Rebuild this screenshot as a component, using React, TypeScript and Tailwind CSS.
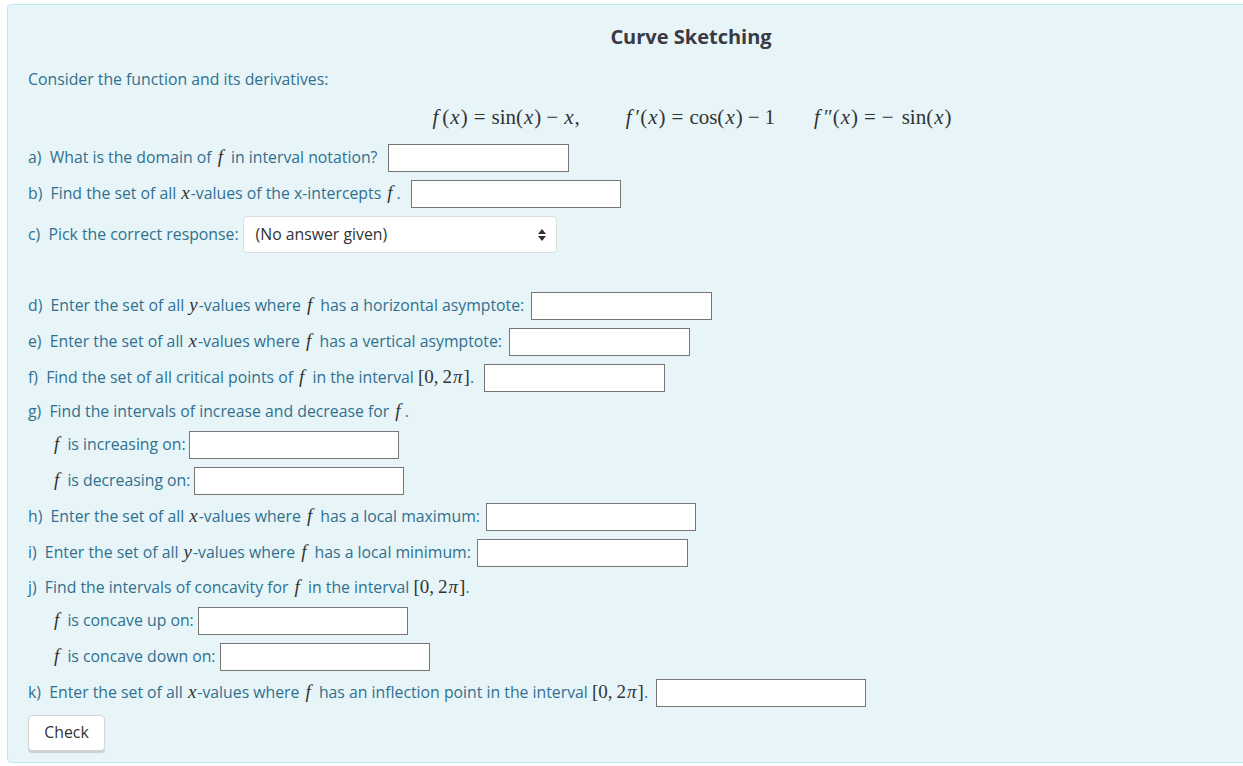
import React from "react";

const MF = '"Liberation Serif", "DejaVu Serif", serif';

const M = ({ children, size = "text-[19px]" }: { children: React.ReactNode; size?: string }) => (
  <span className={`text-[#333] ${size} italic leading-[20px]`} style={{ fontFamily: MF }}>
    {children}
  </span>
);
const R = ({ children }: { children: React.ReactNode }) => (
  <span className="not-italic">{children}</span>
);
const F = () => <span className="pl-[2px] pr-[4px]">f</span>;
const X = () => <span className="px-[1px]">x</span>;
const Y = () => <span className="px-[1px]">y</span>;
const Rel = ({ c }: { c: string }) => <span className="not-italic mx-[6px]">{c}</span>;
const Bin = ({ c }: { c: string }) => <span className="not-italic mx-[5px]">{c}</span>;

const Interval = () => (
  <M>
    <R>[0,</R>
    <span className="ml-[4px]" />
    <R>2</R>
    <span className="px-[1px]">π</span>
    <R>]</R>
  </M>
);

const Input = ({ w, ml }: { w: string; ml: string }) => (
  <span className={`inline-block h-[28px] ${w} ${ml} bg-white border border-[#767676] align-middle shrink-0`} />
);

const Row = ({ children, className = "" }: { children: React.ReactNode; className?: string }) => (
  <div className={`flex items-center h-[28px] mt-[8px] whitespace-nowrap ${className}`}>{children}</div>
);

export default function App() {
  return (
    <div className="w-[1243px] h-[766px] overflow-hidden bg-white" style={{ fontFamily: '"Open Sans", "Noto Sans", sans-serif' }}>
      <div className="ml-[7px] mt-[4px] w-[1368px] border border-[#bce8f1] rounded-[4px] bg-[#e7f5f8] pl-[20px] pt-[18px] pb-[11px] text-[#31708f] text-[15.8px]">
        <div className="h-[28px] leading-[28px] text-center text-[20px] font-bold text-[#3a3a44] pr-[20px]">Curve Sketching</div>
        <div className="mt-[16px] h-[24px] leading-[24px]">Consider the function and its derivatives:</div>
        <div className="mt-[14px] h-[24px] leading-[24px] flex justify-center items-center pr-[20px] whitespace-nowrap">
          <M size="text-[21px]">
            <F />
            <R>(</R>
            <X />
            <R>)</R>
            <Rel c="=" />
            <R>sin(</R>
            <X />
            <R>)</R>
            <Bin c="−" />
            <X />
            <R>,</R>
          </M>
          <span className="w-[44px]" />
          <M size="text-[21px]">
            <F />
            <R>′(</R>
            <X />
            <R>)</R>
            <Rel c="=" />
            <R>cos(</R>
            <X />
            <R>)</R>
            <Bin c="−" />
            <R>1</R>
          </M>
          <span className="w-[37px]" />
          <M size="text-[21px]">
            <F />
            <R>″(</R>
            <X />
            <R>)</R>
            <Rel c="=" />
            <R>−</R>
            <span className="ml-[8px]" />
            <R>sin(</R>
            <X />
            <R>)</R>
          </M>
        </div>

        <Row className="mt-[15px]">
          <span>a)&nbsp; What is the domain of <M><F /></M> in interval notation?</span>
          <Input w="w-[181px]" ml="ml-[11px]" />
        </Row>
        <Row>
          <span>b)&nbsp; Find the set of all <M><X /></M>-values of the x-intercepts <M><F /></M>.</span>
          <Input w="w-[210px]" ml="ml-[10px]" />
        </Row>
        <div className="flex items-center h-[37px] mt-[8px] whitespace-nowrap">
          <span>c)&nbsp; Pick the correct response:</span>
          <div className="ml-[4px] w-[314px] h-[37px] bg-white border border-[#dcdcdc] rounded-[4px] flex items-center justify-between pl-[12px] pr-[10px] text-[#333]">
            <span>(No answer given)</span>
            <svg width="8" height="12" viewBox="0 0 8 12">
              <path d="M4 0 L8 5 L0 5 Z" fill="#333" />
              <path d="M0 7 L8 7 L4 12 Z" fill="#333" />
            </svg>
          </div>
        </div>

        <Row className="mt-[39px]">
          <span>d)&nbsp; Enter the set of all <M><Y /></M>-values where <M><F /></M> has a horizontal asymptote:</span>
          <Input w="w-[181px]" ml="ml-[7px]" />
        </Row>
        <Row>
          <span>e)&nbsp; Enter the set of all <M><X /></M>-values where <M><F /></M> has a vertical asymptote:</span>
          <Input w="w-[181px]" ml="ml-[7px]" />
        </Row>
        <Row>
          <span>f)&nbsp; Find the set of all critical points of <M><F /></M> in the interval <Interval />.</span>
          <Input w="w-[181px]" ml="ml-[10px]" />
        </Row>
        <div className="mt-[7px] h-[24px] leading-[24px] whitespace-nowrap">
          g)&nbsp; Find the intervals of increase and decrease for <M><F /></M>.
        </div>
        <Row className="pl-[24px]">
          <span><M><F /></M> is increasing on:</span>
          <Input w="w-[210px]" ml="ml-[3px]" />
        </Row>
        <Row className="pl-[24px]">
          <span><M><F /></M> is decreasing on:</span>
          <Input w="w-[210px]" ml="ml-[4px]" />
        </Row>
        <Row>
          <span>h)&nbsp; Enter the set of all <M><X /></M>-values where <M><F /></M> has a local maximum:</span>
          <Input w="w-[210px]" ml="ml-[6px]" />
        </Row>
        <Row>
          <span>i)&nbsp; Enter the set of all <M><Y /></M>-values where <M><F /></M> has a local minimum:</span>
          <Input w="w-[211px]" ml="ml-[6px]" />
        </Row>
        <div className="mt-[8px] h-[24px] leading-[24px] whitespace-nowrap">
          j)&nbsp; Find the intervals of concavity for <M><F /></M> in the interval <Interval />.
        </div>
        <Row className="pl-[24px] mt-[7px]">
          <span><M><F /></M> is concave up on:</span>
          <Input w="w-[210px]" ml="ml-[4px]" />
        </Row>
        <Row className="pl-[24px]">
          <span><M><F /></M> is concave down on:</span>
          <Input w="w-[210px]" ml="ml-[4px]" />
        </Row>
        <Row>
          <span>k)&nbsp; Enter the set of all <M><X /></M>-values where <M><F /></M> has an inflection point in the interval <Interval />.</span>
          <Input w="w-[210px]" ml="ml-[8px]" />
        </Row>
        <div className="mt-[8px] h-[36px]">
          <button className="h-[36px] w-[77px] bg-white border border-[#d5d5d5] rounded-[4px] shadow-[0_2px_1px_rgba(0,0,0,0.15)] text-[#333] text-[15.8px] align-top">
            Check
          </button>
        </div>
      </div>
    </div>
  );
}
